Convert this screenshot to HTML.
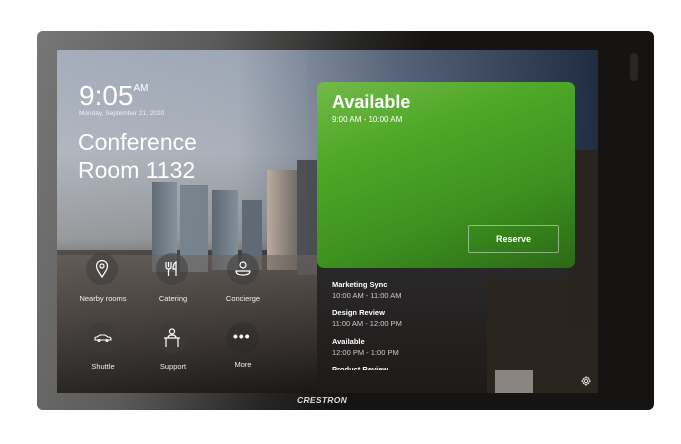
<!DOCTYPE html>
<html><head><meta charset="utf-8"><style>
body{margin:0;width:681px;height:444px;background:#fff;position:relative;overflow:hidden;font-family:"Liberation Sans",sans-serif;color:#fff}
.bez{position:absolute;left:37px;top:31px;width:617px;height:379px;background:#151413;border-radius:6px;overflow:hidden}
.bez:before{content:"";position:absolute;left:0;top:0;width:617px;height:379px;background:linear-gradient(105deg,rgba(255,255,255,.42) 0%,rgba(255,255,255,.3) 25%,rgba(255,255,255,.08) 45%,rgba(255,255,255,0) 55%);}
.scr{position:absolute;left:57px;top:50px;width:541px;height:343px;overflow:hidden;background:linear-gradient(180deg,#98a2b2 0%,#a7adb7 30%,#8c8e92 55%,#3a3633 70%,#211d1a 100%)}
.b{position:absolute;background:linear-gradient(90deg,#55606b,#7d8a95);}
.ov{position:absolute;left:0;top:0;width:250px;height:343px;background:linear-gradient(100deg,rgba(255,255,255,.12),rgba(255,255,255,0))}
.t{position:absolute;white-space:nowrap}
.ic{position:absolute;width:32px;height:32px;border-radius:50%;background:rgba(60,60,60,.55)}
.lbl{position:absolute;font-size:7.5px;width:70px;text-align:center;color:#eee}
.card{position:absolute;left:317px;top:82px;width:258px;height:186px;border-radius:7px;background:linear-gradient(160deg,#74b94a 0%,#4fa827 30%,#3d9220 65%,#2c6a16 100%)}
.ev{font-size:7.5px;line-height:11px}
</style></head><body>
<div class="bez"></div>
<div style="position:absolute;left:630px;top:53px;width:8px;height:28px;border-radius:4px;background:#2a2624"></div>
<div class="scr">
 <div style="position:absolute;left:0;top:200px;width:541px;height:143px;background:linear-gradient(180deg,#3d3a37,#1d1917)"></div>
 <div style="position:absolute;left:180px;top:0;width:361px;height:210px;background:linear-gradient(90deg,rgba(30,45,69,0) 0%,rgba(40,55,80,.6) 45%,rgba(25,38,60,.95) 100%)"></div>
 <div class="b" style="left:95px;top:132px;width:25px;height:90px"></div>
 <div class="b" style="left:123px;top:135px;width:28px;height:87px;background:#6f7c86"></div>
 <div class="b" style="left:155px;top:140px;width:26px;height:80px"></div>
 <div class="b" style="left:185px;top:150px;width:20px;height:70px;background:#5a6570"></div>
 <div class="b" style="left:210px;top:120px;width:30px;height:100px;background:linear-gradient(90deg,#b8a89a,#6e6a66)"></div>
 <div class="b" style="left:240px;top:110px;width:20px;height:115px;background:#4a4e52"></div>
 <div style="position:absolute;left:260px;top:200px;width:281px;height:143px;background:linear-gradient(180deg,#2b2a2c,#1e1a17)"></div>
 <div style="position:absolute;left:430px;top:230px;width:111px;height:113px;background:#2b2520"></div>
 <div style="position:absolute;left:438px;top:320px;width:38px;height:23px;background:#8a8580"></div>
 <div style="position:absolute;left:510px;top:100px;width:31px;height:180px;background:#2a2420"></div>
 <div class="ov"></div>
 <div style="position:absolute;left:0;top:205px;width:260px;height:138px;background:linear-gradient(180deg,rgba(110,100,95,.6),rgba(20,18,17,.3))"></div>
</div>
<div class="t" style="left:79px;top:80px;font-size:28px">9:05<span style="font-size:10px;vertical-align:14px">AM</span></div>
<div class="t" style="left:79px;top:110px;font-size:6.5px;color:#eee">Monday, September 21, 2020</div>
<div class="t" style="left:78px;top:128px;font-size:23px;line-height:28px">Conference<br>Room 1132</div>

<div class="ic" style="left:86px;top:253px"></div>
<svg style="position:absolute;left:95px;top:260px" width="14" height="18" viewBox="0 0 14 18" fill="none" stroke="#fff" stroke-width="1.2"><path d="M7 17C3 11 1.5 8.5 1.5 6a5.5 5.5 0 0 1 11 0c0 2.5-1.5 5-5.5 11z"/><circle cx="7" cy="6" r="2"/></svg>
<div class="ic" style="left:156px;top:253px"></div>
<svg style="position:absolute;left:164px;top:261px" width="16" height="16" viewBox="0 0 16 16" fill="none" stroke="#fff" stroke-width="1.2"><path d="M2 1v5q0 2 2.5 2V15M7 1v5q0 2-2.5 2M4.5 1v5M12 15V1q-3 2-3 7h3"/></svg>
<div class="ic" style="left:227px;top:253px"></div>
<svg style="position:absolute;left:234px;top:261px" width="18" height="16" viewBox="0 0 18 16" fill="none" stroke="#fff" stroke-width="1.2"><circle cx="9" cy="4" r="3"/><path d="M2 10h14q0 4-7 4t-7-4z"/></svg>
<div class="lbl" style="left:68px;top:294px">Nearby rooms</div>
<div class="lbl" style="left:138px;top:294px">Catering</div>
<div class="lbl" style="left:208px;top:294px">Concierge</div>

<div class="ic" style="left:86px;top:322px"></div>
<svg style="position:absolute;left:94px;top:334px" width="18" height="8" viewBox="0 0 18 8" fill="none" stroke="#fff" stroke-width="1.1"><path d="M1 6V4q0-1 2-1l3-2h5l3 2q3 0 3 2v1H1z"/><circle cx="5" cy="6.5" r="1"/><circle cx="13" cy="6.5" r="1"/></svg>
<div class="ic" style="left:156px;top:322px"></div>
<svg style="position:absolute;left:163px;top:328px" width="18" height="20" viewBox="0 0 18 20" fill="none" stroke="#fff" stroke-width="1.2"><circle cx="9" cy="3.5" r="2.5"/><path d="M5 10q0-3 4-3t4 3M1 10h16M3 10v9M15 10v9"/></svg>
<div class="ic" style="left:227px;top:322px;background:rgba(40,40,40,.4)"></div>
<div class="t" style="left:233px;top:328px;font-size:14px;letter-spacing:1px;font-weight:bold">•••</div>
<div class="lbl" style="left:68px;top:362px">Shuttle</div>
<div class="lbl" style="left:138px;top:362px">Support</div>
<div class="lbl" style="left:208px;top:360px">More</div>

<div class="card"></div>
<div class="t" style="left:332px;top:92px;font-size:18px;font-weight:bold">Available</div>
<div class="t" style="left:332px;top:115px;font-size:8px">9:00 AM - 10:00 AM</div>
<div style="position:absolute;left:468px;top:225px;width:91px;height:28px;border:1px solid rgba(255,255,255,.45);border-radius:2px;box-sizing:border-box;text-align:center;font-size:9px;font-weight:bold;line-height:26px">Reserve</div>

<div class="t ev" style="left:332px;top:279px"><b>Marketing Sync</b><br><span style="color:#ccc">10:00 AM - 11:00 AM</span></div>
<div class="t ev" style="left:332px;top:307px"><b>Design Review</b><br><span style="color:#ccc">11:00 AM - 12:00 PM</span></div>
<div class="t ev" style="left:332px;top:336px"><b>Available</b><br><span style="color:#ccc">12:00 PM - 1:00 PM</span></div>
<div class="t ev" style="left:332px;top:364px;height:6px;overflow:hidden"><b>Product Review</b></div>
<svg style="position:absolute;left:581px;top:376px" width="10" height="10" viewBox="0 0 10 10" fill="none" stroke="#ddd" stroke-width="1"><circle cx="5" cy="5" r="1.6"/><path d="M5 .8l1 1.2 1.6-.3.3 1.6L9.2 5 7.9 6 7.6 7.6 6 7.9 5 9.2 4 7.9 2.4 7.6 2.1 6 .8 5 2.1 4 2.4 2.4 4 2.1z"/></svg>
<div class="t" style="left:297px;top:395px;font-size:8.5px;font-weight:bold;font-style:italic;color:#ddd;letter-spacing:.3px">CRESTRON</div>
</body></html>
